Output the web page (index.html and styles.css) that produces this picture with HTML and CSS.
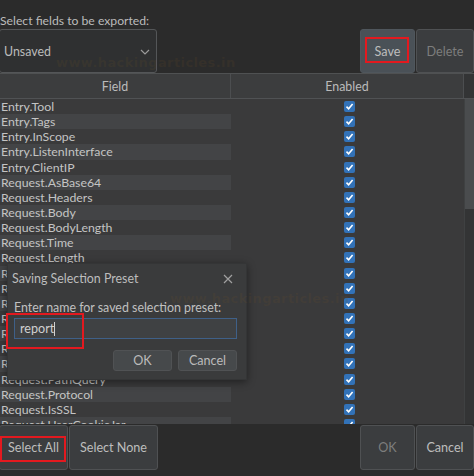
FILE: index.html
```html
<!DOCTYPE html>
<html>
<head>
<meta charset="utf-8">
<link rel="stylesheet" href="styles.css">
</head>
<body>
<div class="page">
  <div class="top">
    <div class="label">Select fields to be exported:</div>
    <div class="toolbar">
      <div class="combo">
        <span>Unsaved</span>
        <svg class="chev" width="10" height="6" viewBox="0 0 10 6"><path d="M1 1 L5 5 L9 1" fill="none" stroke="#9a9a9a" stroke-width="1.2"/></svg>
      </div>
      <div class="spacer"></div>
      <div class="btn btn-focus">Save<span class="mark mark-save"></span></div>
      <div class="btn btn-disabled">Delete</div>
    </div>
  </div>

  <div class="table">
    <div class="thead">
      <div class="th th-field">Field</div>
      <div class="th th-enabled">Enabled</div>
      <div class="corner"></div>
    </div>
    <div class="tbody">
      <div class="rows">
        <div class="row"><div class="cell">Entry.Tool</div><div class="cell-check"><i class="cb"></i></div></div>
        <div class="row alt"><div class="cell">Entry.Tags</div><div class="cell-check"><i class="cb"></i></div></div>
        <div class="row"><div class="cell">Entry.InScope</div><div class="cell-check"><i class="cb"></i></div></div>
        <div class="row alt"><div class="cell">Entry.ListenInterface</div><div class="cell-check"><i class="cb"></i></div></div>
        <div class="row"><div class="cell">Entry.ClientIP</div><div class="cell-check"><i class="cb"></i></div></div>
        <div class="row alt"><div class="cell">Request.AsBase64</div><div class="cell-check"><i class="cb"></i></div></div>
        <div class="row"><div class="cell">Request.Headers</div><div class="cell-check"><i class="cb"></i></div></div>
        <div class="row alt"><div class="cell">Request.Body</div><div class="cell-check"><i class="cb"></i></div></div>
        <div class="row"><div class="cell">Request.BodyLength</div><div class="cell-check"><i class="cb"></i></div></div>
        <div class="row alt"><div class="cell">Request.Time</div><div class="cell-check"><i class="cb"></i></div></div>
        <div class="row"><div class="cell">Request.Length</div><div class="cell-check"><i class="cb"></i></div></div>
        <div class="row alt"><div class="cell">Request.Tool</div><div class="cell-check"><i class="cb"></i></div></div>
        <div class="row"><div class="cell">Request.Comment</div><div class="cell-check"><i class="cb"></i></div></div>
        <div class="row alt"><div class="cell">Request.Highlight</div><div class="cell-check"><i class="cb"></i></div></div>
        <div class="row"><div class="cell">Request.Edited</div><div class="cell-check"><i class="cb"></i></div></div>
        <div class="row alt"><div class="cell">Request.Method</div><div class="cell-check"><i class="cb"></i></div></div>
        <div class="row"><div class="cell">Request.URL</div><div class="cell-check"><i class="cb"></i></div></div>
        <div class="row alt"><div class="cell">Request.Path</div><div class="cell-check"><i class="cb"></i></div></div>
        <div class="row"><div class="cell">Request.PathQuery</div><div class="cell-check"><i class="cb"></i></div></div>
        <div class="row alt"><div class="cell">Request.Protocol</div><div class="cell-check"><i class="cb"></i></div></div>
        <div class="row"><div class="cell">Request.IsSSL</div><div class="cell-check"><i class="cb"></i></div></div>
        <div class="row alt"><div class="cell">Request.UserCookieJar</div><div class="cell-check"><i class="cb"></i></div></div>
      </div>
      <div class="scroll"><div class="thumb"></div></div>
    </div>
  </div>

  <div class="bottom">
    <div class="btn btn-wide">Select All<span class="mark mark-all"></span></div>
    <div class="btn btn-none">Select None</div>
    <div class="spacer"></div>
    <div class="btn btn-disabled btn-ok">OK</div>
    <div class="btn btn-cancel">Cancel</div>
  </div>

  <div class="watermark wm1">www.hackingarticles.in</div>

  <div class="dialog">
    <div class="dtitle">
      <span>Saving Selection Preset</span>
      <svg width="10" height="10" viewBox="0 0 10 10"><path d="M1 1 L9 9 M9 1 L1 9" stroke="#a0a0a0" stroke-width="1.2"/></svg>
    </div>
    <div class="dbody">
      <div class="dlabel">Enter name for saved selection preset:</div>
      <div class="dinput">report<span class="caret"></span></div>
      <div class="dbtns">
        <div class="dbtn">OK</div>
        <div class="dbtn">Cancel</div>
      </div>
    </div>
    <span class="mark mark-input"></span>
  </div>

  <div class="watermark wm2">www.hackingarticles.in</div>
</div>
</body>
</html>
```

FILE: styles.css
```css
html, body {
  margin: 0;
  padding: 0;
  background: #2b2b2b;
}
.page {
  position: relative;
  width: 474px;
  height: 476px;
  overflow: hidden;
  background: #2b2b2b;
  font-family: "Lato", "Open Sans", sans-serif;
  font-size: 12.2px;
  color: #bbbbbb;
  display: flex;
  flex-direction: column;
}
.top {
  padding-top: 12px;
  height: 73px;
  flex: 0 0 73px;
  box-sizing: border-box;
}
.label {
  line-height: 17px;
  height: 17px;
  font-size: 12.2px;
}
.toolbar {
  display: flex;
  height: 44px;
}
.combo {
  width: 158px;
  margin-left: -1px;
  box-sizing: border-box;
  border: 1px solid #545658;
  border-radius: 3px;
  display: flex;
  align-items: center;
  justify-content: space-between;
  padding: 0 6px 0 4px;
  background: #2f3031;
  font-size: 12.4px;
}
.chev { margin-top: 1px; }
.spacer { flex: 1; }
.btn {
  position: relative;
  box-sizing: border-box;
  width: 58px;
  border: 1px solid #4f5153;
  border-radius: 3px;
  background: #3b3d3f;
  display: flex;
  align-items: center;
  justify-content: center;
  color: #bdbdbd;
  font-size: 12.6px;
}
.btn-focus {
  width: 55px;
  background: #4a5157;
  border-color: #4f565c;
  margin-right: 1px;
}
.btn-disabled { color: #7d7d7d; }
.mark {
  position: absolute;
  border: 2px solid #e3191f;
  box-sizing: border-box;
}
.mark-save { left: 4px; top: 7px; width: 44px; height: 26px; }

.table {
  height: 351px;
  flex: 0 0 351px;
  border-top: 1px solid #4f5152;
  box-sizing: border-box;
  display: flex;
  flex-direction: column;
  background: #3a3a3b;
}
.thead {
  display: flex;
  height: 25px;
  border-bottom: 1px solid #505254;
  box-sizing: border-box;
  background: #3c3d3e;
  flex: 0 0 auto;
}
.th {
  display: flex;
  align-items: center;
  justify-content: center;
  font-size: 12.4px;
  color: #bbbbbb;
}
.th-field { width: 231px; border-right: 1px solid #4c4e50; box-sizing: border-box; }
.th-enabled { width: 233px; border-right: 1px solid #4c4e50; box-sizing: border-box; }
.corner { flex: 1; background: #333435; }
.tbody {
  flex: 1;
  display: flex;
  overflow: hidden;
}
.rows {
  width: 464px;
  display: flex;
  flex-direction: column;
}
.row {
  display: flex;
  height: 15.15px;
  flex: 0 0 15.15px;
  line-height: 15.15px;
  background: #3a3a3b;
}
.row.alt .cell { background: #434446; }
.cell {
  width: 231px;
  padding-left: 1px;
  box-sizing: border-box;
  white-space: nowrap;
  overflow: hidden;
  font-size: 12.3px;
  color: #c4c4c4;
}
.cell-check {
  width: 233px;
  display: flex;
  align-items: center;
  justify-content: center;
}
.cb {
  display: block;
  width: 11px;
  height: 11px;
  margin-left: 3px;
  border-radius: 2px;
  background: #3272b8 url("data:image/svg+xml;utf8,<svg xmlns='http://www.w3.org/2000/svg' width='11' height='11' viewBox='0 0 11 11'><path d='M2.5 5.6 L4.6 7.7 L8.6 3' fill='none' stroke='white' stroke-width='1.6'/></svg>") no-repeat center;
}
.scroll {
  flex: 1;
  background: #333435;
  border-left: 1px solid #3f4142;
}
.thumb {
  height: 110px;
  background: #4a4c4e;
}

.bottom {
  flex: 1;
  display: flex;
  padding-top: 1px;
  padding-bottom: 6px;
  box-sizing: border-box;
}
.btn-wide {
  width: 69px;
  margin-left: -1px;
  margin-right: 1px;
}
.btn-none { width: 89px; }
.btn-ok { width: 55px; margin-right: 1px; }
.btn-cancel { width: 58px; }
.mark-all { left: 0; top: 10px; width: 66px; height: 26px; }

.watermark {
  position: absolute;
  font-family: "DejaVu Sans", "Liberation Sans", sans-serif;
  font-size: 13px;
  font-weight: bold;
  letter-spacing: 0.4px;
  color: rgba(110, 80, 40, 0.16);
  white-space: nowrap;
  pointer-events: none;
}
.wm1 { left: 56px; top: 55px; }
.wm2 { left: 170px; top: 291px; }

.dialog {
  position: absolute;
  left: 7px;
  top: 263px;
  width: 240px;
  height: 117px;
  background: #3a3b3c;
  border: 1px solid #343536;
  box-shadow: 0 2px 8px rgba(0, 0, 0, 0.45);
  box-sizing: border-box;
}
.dtitle {
  height: 29px;
  display: flex;
  align-items: center;
  justify-content: space-between;
  padding: 0 13px 0 4px;
  font-size: 12.4px;
  color: #bdbdbd;
}
.dbody {
  padding: 0 9px 0 6px;
}
.dlabel {
  height: 25px;
  line-height: 17px;
  padding-top: 6px;
  box-sizing: border-box;
  font-size: 12.4px;
  white-space: nowrap;
  color: #c0c0c0;
}
.dinput {
  height: 21px;
  box-sizing: border-box;
  border: 1px solid #3f6088;
  background: #3f4143;
  display: flex;
  align-items: center;
  padding-left: 5px;
  font-size: 12.6px;
  color: #d0d0d0;
}
.caret {
  display: inline-block;
  width: 1px;
  height: 14px;
  background: #d0d0d0;
}
.dbtns {
  display: flex;
  justify-content: flex-end;
  gap: 6px;
  margin-top: 11px;
}
.dbtn {
  width: 59px;
  height: 21px;
  box-sizing: border-box;
  border: 1px solid #505254;
  border-radius: 3px;
  background: #46494b;
  display: flex;
  align-items: center;
  justify-content: center;
  font-size: 12.6px;
  color: #bbbbbb;
}
.mark-input { left: -2px; top: 49px; width: 78px; height: 36px; }
```
